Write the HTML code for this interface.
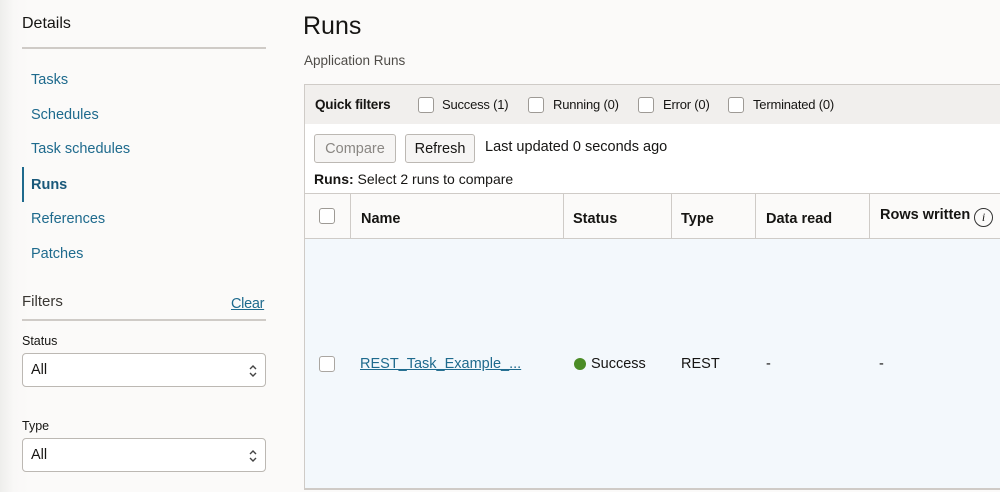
<!DOCTYPE html>
<html><head><style>
*{margin:0;padding:0;box-sizing:border-box}
body{width:1000px;height:492px;overflow:hidden;background:#fbfaf9;font-family:"Liberation Sans",Arial,sans-serif;color:#161513;position:relative}
.a{position:absolute;white-space:nowrap}
.side{position:absolute;left:0;top:0;width:282px;height:492px;background:linear-gradient(to right,#eeeeec 0,#f9f8f7 14px,#fbfaf9 30px)}
.nav{color:#1e6a8d;font-size:14.5px}
.hr{position:absolute;left:22px;width:244px;height:2px;background:#cfcbc7}
.sel{position:absolute;left:22px;width:244px;height:34px;border:1px solid #bcb8b3;border-radius:4px;background:#fff;font-size:14.5px;padding:8px 0 0 8px}
.sel svg{position:absolute;right:7px;top:9px}
.cb{position:absolute;width:16px;height:16px;border:1px solid #9e9a95;border-radius:3px;background:#fff}
.btn{position:absolute;height:29px;border:1px solid #bcb8b3;border-radius:3px;font-size:14.5px;padding:6px 0 0;text-align:center}
.th{font-weight:bold;font-size:14.5px}
.vl{position:absolute;top:194px;width:1px;height:44px;background:#cfcbc7}
.q{font-size:13px;letter-spacing:-0.2px}
</style></head><body>
<div class="side"></div>
<div class="a" style="left:22px;top:15px;font-size:16px">Details</div>
<div class="hr" style="top:47px"></div>
<div class="a nav" style="left:31px;top:72px">Tasks</div>
<div class="a nav" style="left:31px;top:107px">Schedules</div>
<div class="a nav" style="left:31px;top:141px">Task schedules</div>
<div class="a" style="left:22px;top:167px;width:2px;height:35px;background:#1e6a8d"></div>
<div class="a nav" style="left:31px;top:177px;font-weight:bold;color:#19587a">Runs</div>
<div class="a nav" style="left:31px;top:211px">References</div>
<div class="a nav" style="left:31px;top:246px">Patches</div>
<div class="a" style="left:22px;top:293px;font-size:15px;color:#3a3733">Filters</div>
<div class="a" style="left:231px;top:296px;font-size:14.5px;color:#1e6a8d;text-decoration:underline;letter-spacing:-0.3px">Clear</div>
<div class="hr" style="top:319px"></div>
<div class="a" style="left:22px;top:334px;font-size:12.5px">Status</div>
<div class="sel" style="top:353px">All<svg width="10" height="16" viewBox="0 0 10 16"><path d="M2 6 L5 3 L8 6 M2 10 L5 13 L8 10" fill="none" stroke="#444" stroke-width="1.4"/></svg></div>
<div class="a" style="left:22px;top:419px;font-size:12.5px">Type</div>
<div class="sel" style="top:438px">All<svg width="10" height="16" viewBox="0 0 10 16"><path d="M2 6 L5 3 L8 6 M2 10 L5 13 L8 10" fill="none" stroke="#444" stroke-width="1.4"/></svg></div>

<div class="a" style="left:303px;top:12px;font-size:25px">Runs</div>
<div class="a" style="left:304px;top:53px;font-size:13.5px;color:#4f4c48">Application Runs</div>

<div class="a" style="left:304px;top:84px;width:696px;height:110px;border-left:1px solid #cfcbc7;border-top:1px solid #cfcbc7;background:#fff"></div>
<div class="a" style="left:305px;top:85px;width:695px;height:39px;background:#f1efed"></div>
<div class="a" style="left:315px;top:97px;font-size:13.5px;font-weight:bold;letter-spacing:-0.2px">Quick filters</div>
<div class="cb" style="left:418px;top:97px"></div><div class="a q" style="left:442px;top:97px">Success (1)</div>
<div class="cb" style="left:528px;top:97px"></div><div class="a q" style="left:553px;top:97px">Running (0)</div>
<div class="cb" style="left:638px;top:97px"></div><div class="a q" style="left:663px;top:97px">Error (0)</div>
<div class="cb" style="left:728px;top:97px"></div><div class="a q" style="left:753px;top:97px">Terminated (0)</div>
<div class="btn" style="left:314px;top:134px;width:82px;color:#8a8783;background:#f6f5f4">Compare</div>
<div class="btn" style="left:405px;top:134px;width:70px;background:#f6f5f4">Refresh</div>
<div class="a" style="left:485px;top:139px;font-size:14.5px">Last updated 0 seconds ago</div>
<div class="a" style="left:314px;top:171px;font-size:14px"><b>Runs:</b> Select 2 runs to compare</div>

<div class="a" style="left:304px;top:193px;width:696px;height:46px;border-top:1px solid #cfcbc7;border-bottom:1px solid #cfcbc7;border-left:1px solid #cfcbc7;background:#fbfaf9"></div>
<div class="vl" style="left:350px"></div><div class="vl" style="left:563px"></div><div class="vl" style="left:671px"></div><div class="vl" style="left:755px"></div><div class="vl" style="left:869px"></div>
<div class="cb" style="left:319px;top:208px"></div>
<div class="a th" style="left:361px;top:211px">Name</div>
<div class="a th" style="left:573px;top:211px">Status</div>
<div class="a th" style="left:681px;top:211px">Type</div>
<div class="a th" style="left:766px;top:211px">Data read</div>
<div class="a th" style="left:880px;top:207px">Rows written</div>
<div class="a" style="left:974px;top:208px;width:19px;height:19px;border:1px solid #333;border-radius:50%;font-size:12px;font-style:italic;font-family:'Liberation Serif',serif;text-align:center;line-height:17px">i</div>

<div class="a" style="left:304px;top:239px;width:696px;height:251px;background:#f3f8fc;border-left:1px solid #cfcbc7;border-bottom:2px solid #cfcbc7"></div>
<div class="cb" style="left:319px;top:356px;border-color:#aaa6a1"></div>
<div class="a" style="left:360px;top:356px;font-size:14.5px;color:#1e6a8d;text-decoration:underline">REST_Task_Example_...</div>
<div class="a" style="left:574px;top:358px;width:12px;height:12px;border-radius:50%;background:#4b8c26"></div>
<div class="a" style="left:591px;top:356px;font-size:14.5px">Success</div>
<div class="a" style="left:681px;top:356px;font-size:14.5px">REST</div>
<div class="a" style="left:766px;top:356px;font-size:14.5px">-</div>
<div class="a" style="left:879px;top:356px;font-size:14.5px">-</div>
</body></html>
